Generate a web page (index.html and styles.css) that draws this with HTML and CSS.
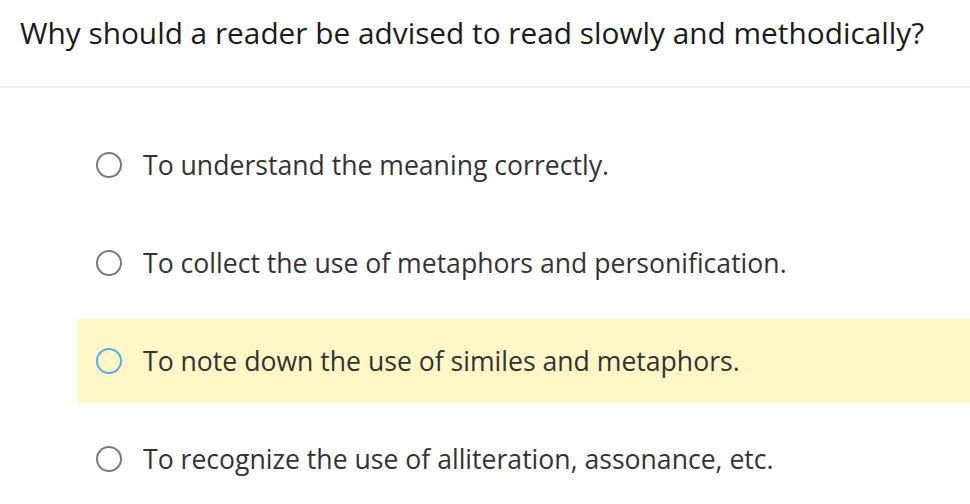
FILE: index.html
```html
<!DOCTYPE html>
<html>
<head>
<meta charset="utf-8">
<link rel="stylesheet" href="styles.css">
</head>
<body>
<div class="question">Why should a reader be advised to read slowly and methodically?</div>
<div class="divider"></div>
<div class="options">
  <div class="option"><span class="radio"></span><span class="label">To understand the meaning correctly.</span></div>
  <div class="option"><span class="radio"></span><span class="label">To collect the use of metaphors and personification.</span></div>
  <div class="option hover"><span class="radio"></span><span class="label">To note down the use of similes and metaphors.</span></div>
  <div class="option"><span class="radio"></span><span class="label">To recognize the use of alliteration, assonance, etc.</span></div>
</div>
</body>
</html>
```
FILE: styles.css
```css
html, body {
  margin: 0;
  padding: 0;
  background: #fff;
  width: 970px;
  height: 504px;
  overflow: hidden;
}
body {
  font-family: "Open Sans", "Liberation Sans", sans-serif;
}
.question {
  padding: 13px 0 0 20px;
  height: 86px;
  box-sizing: border-box;
  font-size: 29.8px;
  line-height: 40px;
  color: #1b1b1b;
  white-space: nowrap;
}
.divider {
  height: 2px;
  background: #efefef;
}
.options {
  display: flex;
  flex-direction: column;
  gap: 14px;
  padding: 35px 0 0 78px;
}
.option {
  display: flex;
  align-items: center;
  height: 84px;
  padding-left: 18px;
}
.option.hover {
  background: #fff7c6;
}
.radio {
  width: 22px;
  height: 22px;
  border: 2px solid #7a7a7a;
  border-radius: 50%;
  flex: none;
}
.option.hover .radio {
  border-color: #5aa9f0;
}
.label {
  margin-left: 21px;
  font-size: 26.6px;
  color: #333;
  white-space: nowrap;
}
```
